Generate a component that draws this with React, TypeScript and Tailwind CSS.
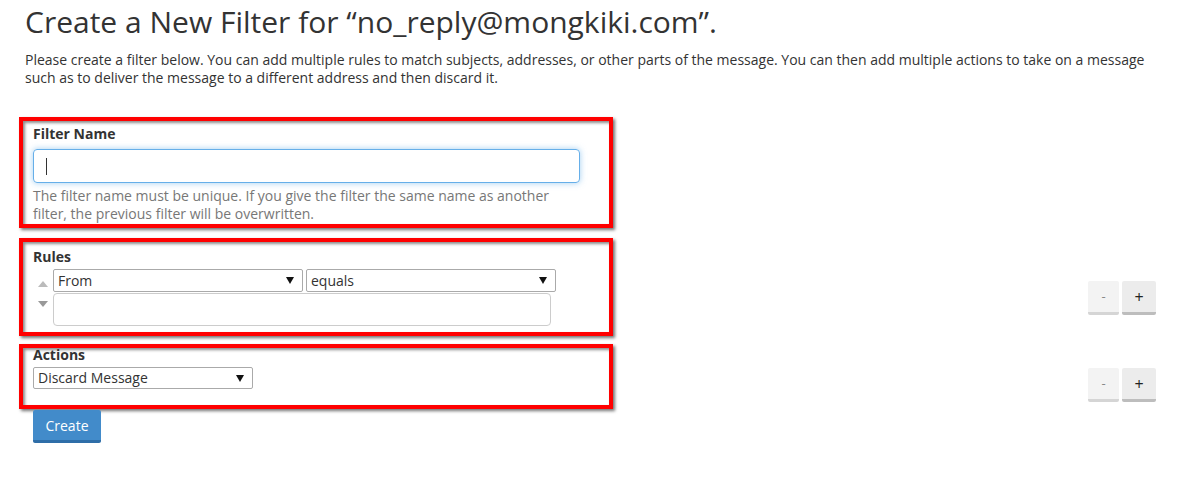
import React from "react";

function Select({ label, className }: { label: string; className: string }) {
  return (
    <div
      className={`flex items-center justify-between border border-[#aaaaaa] rounded-[2px] bg-white pl-[4px] pr-[8px] text-[14px] text-[#333] leading-none ${className}`}
    >
      <span>{label}</span>
      <svg width="8" height="7" viewBox="0 0 8 7">
        <path d="M0 0 L8 0 L4 7 Z" fill="#111" />
      </svg>
    </div>
  );
}

function PmButtons({ className }: { className: string }) {
  return (
    <div className={`flex gap-[3px] shrink-0 ${className}`}>
      <div className="w-[31px] h-[34px] flex items-center justify-center bg-[#f3f3f3] border-b-[3px] border-[#d5d5d5] rounded-[2px] text-[#888] text-[13px]">
        -
      </div>
      <div className="w-[34px] h-[34px] flex items-center justify-center bg-[#ececec] border-b-[3px] border-[#bdbdbd] rounded-[2px] text-[#222] text-[16px]">
        +
      </div>
    </div>
  );
}

const boxCls =
  "w-[594px] border-[4px] border-[#ff0000] shadow-[2px_2px_3px_rgba(0,0,0,0.55),inset_2px_2px_3px_rgba(0,0,0,0.45)] bg-white";

export default function App() {
  return (
    <div className="w-[1193px] h-[479px] bg-white font-['Open_Sans',sans-serif] text-[#333] overflow-hidden">
      <div className="pl-[25px] pr-[37px]">
        <h1 className="text-[30px] leading-[36px] font-normal pt-[4px] text-[#333]">
          Create a New Filter for “no_reply@mongkiki.com”.
        </h1>
        <p className="text-[14px] leading-[18px] mt-[11px] pr-[10px]">
          Please create a filter below. You can add multiple rules to match subjects, addresses, or other parts of the
          message. You can then add multiple actions to take on a message such as to deliver the message to a different
          address and then discard it.
        </p>
      </div>

      <div className="pl-[19px] pr-[37px] mt-[30px] flex flex-col">
        {/* Filter Name */}
        <div className={`${boxCls} h-[111px] pl-[10px] pt-[3px]`}>
          <div className="text-[14px] leading-[20px] font-bold text-[#333]">Filter Name</div>
          <div className="mt-[5px] w-[547px] h-[34px] border border-[#66afe9] rounded-[4px] shadow-[0_0_6px_rgba(102,175,233,0.6)] flex items-center pl-[12px]">
            <div className="w-[1px] h-[17px] bg-[#333]" />
          </div>
          <div className="mt-[4px] w-[547px] text-[14px] leading-[18px] text-[#777]">
            The filter name must be unique. If you give the filter the same name as another filter, the previous filter
            will be overwritten.
          </div>
        </div>

        {/* Rules */}
        <div className="flex justify-between mt-[10px]">
          <div className={`${boxCls} h-[98px] pl-[10px] pt-[5px]`}>
            <div className="text-[14px] leading-[20px] font-bold text-[#333]">Rules</div>
            <div className="flex mt-[2px]">
              <div className="w-[20px] flex flex-col items-center pt-[12px] gap-[14px]">
                <svg width="10" height="6" viewBox="0 0 10 6">
                  <path d="M0 6 L10 6 L5 0 Z" fill="#bbbbbb" />
                </svg>
                <svg width="10" height="6" viewBox="0 0 10 6">
                  <path d="M0 0 L10 0 L5 6 Z" fill="#999999" />
                </svg>
              </div>
              <div className="flex flex-col">
                <div className="flex gap-[3px]">
                  <Select label="From" className="w-[250px] h-[23px]" />
                  <Select label="equals" className="w-[250px] h-[23px]" />
                </div>
                <div className="mt-[1px] w-[498px] h-[33px] border border-[#cccccc] rounded-[4px]" />
              </div>
            </div>
          </div>
          <PmButtons className="mt-[43px]" />
        </div>

        {/* Actions */}
        <div className="flex justify-between mt-[8px]">
          <div className={`${boxCls} h-[65px] pl-[10px] pt-0`}>
            <div className="text-[14px] leading-[14px] font-bold text-[#333]">Actions</div>
            <Select label="Discard Message" className="mt-[5px] w-[220px] h-[22px]" />
          </div>
          <PmButtons className="mt-[24px]" />
        </div>

        <div className="pl-[14px] mt-[1px]">
          <div className="w-[68px] h-[33px] bg-[#428bca] border-b-[3px] border-[#2f6ea8] rounded-[2px] text-white text-[14px] flex items-center justify-center">
            Create
          </div>
        </div>
      </div>
    </div>
  );
}
